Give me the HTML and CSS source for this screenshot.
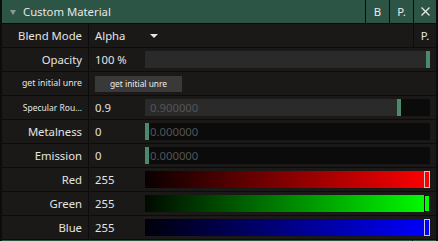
FILE: index.html
```html
<!DOCTYPE html>
<html>
<head>
<meta charset="utf-8">
<link rel="stylesheet" href="styles.css">
</head>
<body>
<div class="panel">
  <div class="header">
    <div class="title"><span class="caret"></span>Custom Material</div>
    <div class="hbtn">B</div>
    <div class="hbtn">P.</div>
    <div class="hbtn x"><svg width="11" height="11" viewBox="0 0 11 11"><path d="M1.5 1.5L9.5 9.5M9.5 1.5L1.5 9.5" stroke="#e8e8e8" stroke-width="1.3"/></svg></div>
  </div>

  <div class="row">
    <div class="label">Blend Mode</div>
    <div class="value split">
      <div class="dropdown">Alpha<span class="dd"></span></div>
      <div class="pbtn">P.</div>
    </div>
  </div>

  <div class="row">
    <div class="label">Opacity</div>
    <div class="value">
      <span class="num">100 %</span>
      <div class="bar plain"><div class="fill" style="width:100%"></div><div class="knob"></div></div>
    </div>
  </div>

  <div class="row">
    <div class="label small">get initial unre</div>
    <div class="value">
      <div class="btn">get initial unre</div>
    </div>
  </div>

  <div class="row">
    <div class="label smaller">Specular Rou...</div>
    <div class="value">
      <span class="num">0.9</span>
      <div class="bar plain dark"><div class="fill" style="width:88.4%"></div><div class="knob"></div><span class="bartext">0.900000</span></div>
    </div>
  </div>

  <div class="row">
    <div class="label">Metalness</div>
    <div class="value">
      <span class="num">0</span>
      <div class="bar plain dark"><div class="fill" style="width:0%"></div><div class="knob"></div><span class="bartext">0.000000</span></div>
    </div>
  </div>

  <div class="row">
    <div class="label">Emission</div>
    <div class="value">
      <span class="num">0</span>
      <div class="bar plain dark"><div class="fill" style="width:0%"></div><div class="knob"></div><span class="bartext">0.000000</span></div>
    </div>
  </div>

  <div class="row">
    <div class="label">Red</div>
    <div class="value">
      <span class="num">255</span>
      <div class="bar grad red"><div class="cknob outline"></div></div>
    </div>
  </div>

  <div class="row">
    <div class="label">Green</div>
    <div class="value">
      <span class="num">255</span>
      <div class="bar grad green"><div class="cknob solid"></div></div>
    </div>
  </div>

  <div class="row">
    <div class="label">Blue</div>
    <div class="value">
      <span class="num">255</span>
      <div class="bar grad blue"><div class="cknob outline"></div></div>
    </div>
  </div>

  <div class="header next">
    <div class="title"></div>
    <div class="hbtn"></div>
  </div>
</div>
</body>
</html>
```

FILE: styles.css
```css
html, body {
  margin: 0;
  padding: 0;
  background: #0c0c0c;
  overflow: hidden;
}
body {
  width: 438px;
  height: 241px;
  font-family: "Noto Sans", "Open Sans", sans-serif;
  color: #e4e4e4;
}
.panel {
  display: flex;
  flex-direction: column;
  gap: 1px;
  padding: 0 2px 0 2px;
  width: 434px;
}
.header {
  display: flex;
  gap: 1px;
  height: 23px;
  flex: none;
}
.header .title {
  flex: 1;
  background: #2c5545;
  display: flex;
  align-items: center;
  font-size: 11.3px;
  color: #e6e6e6;
  padding-left: 8px;
}
.caret {
  width: 0;
  height: 0;
  border-left: 3.5px solid transparent;
  border-right: 3.5px solid transparent;
  border-top: 5px solid #8c9c95;
  margin-right: 7px;
  margin-top: 1px;
}
.hbtn {
  width: 23px;
  background: #2c5545;
  display: flex;
  align-items: center;
  justify-content: center;
  font-size: 11.3px;
  color: #ececec;
}
.hbtn.x { width: 22px; }
.row {
  display: grid;
  grid-template-columns: 86px 1fr;
  gap: 1px;
  height: 23px;
  flex: none;
}
.label {
  background: #1a1917;
  text-align: right;
  font-size: 11.3px;
  line-height: 23px;
  padding-right: 6px;
  white-space: nowrap;
  overflow: hidden;
}
.label.small {
  font-size: 8.8px;
}
.label.smaller {
  font-size: 8.5px;
}
.value {
  background: #1a1917;
  display: flex;
  align-items: center;
  padding: 0 6px 0 6px;
  font-size: 11.3px;
}
.value.split {
  padding: 0;
  gap: 1px;
  background: #0c0c0c;
}
.dropdown {
  flex: 1;
  background: #1a1917;
  height: 23px;
  display: flex;
  align-items: center;
  padding-left: 6px;
}
.dd {
  width: 0;
  height: 0;
  border-left: 4px solid transparent;
  border-right: 4px solid transparent;
  border-top: 4px solid #e6e6e6;
  margin-left: 25px;
}
.pbtn {
  width: 22px;
  height: 23px;
  background: #1a1917;
  display: flex;
  align-items: center;
  justify-content: center;
  font-size: 11.3px;
}
.num {
  width: 50px;
  flex: none;
}
.bar {
  flex: 1;
  height: 17px;
  position: relative;
  display: flex;
}
.bar.plain { background: #2a2a2a; }
.bar.plain.dark { background: #0b0b0b; }
.bar .fill {
  background: #2a2a2a;
  height: 100%;
  flex: none;
}
.bar .knob {
  width: 4px;
  height: 100%;
  background: #4a8b6e;
  flex: none;
  margin-left: -4px;
}
.bar.dark .knob { margin-left: 0; }
.bar .bartext {
  position: absolute;
  left: 5px;
  top: 0;
  line-height: 17px;
  color: #545454;
  font-size: 11.3px;
}
.btn {
  width: 87px;
  height: 16px;
  background: #393939;
  font-size: 8.4px;
  text-align: center;
  line-height: 16px;
  color: #ececec;
}
.bar.grad { justify-content: flex-end; }
.bar.red { background: linear-gradient(to right, #0a0000, #ff0000); }
.bar.green { background: linear-gradient(to right, #000a00, #00ff00); }
.bar.blue { background: linear-gradient(to right, #00000a, #0000ff); }
.cknob {
  width: 6px;
  height: 100%;
  box-sizing: border-box;
}
.cknob.outline { border: 1px solid #c8c8c8; }
.cknob.solid {
  border: 1px solid #101010;
  background: #00ff00;
}
.header.next .title { padding: 0; }
```
